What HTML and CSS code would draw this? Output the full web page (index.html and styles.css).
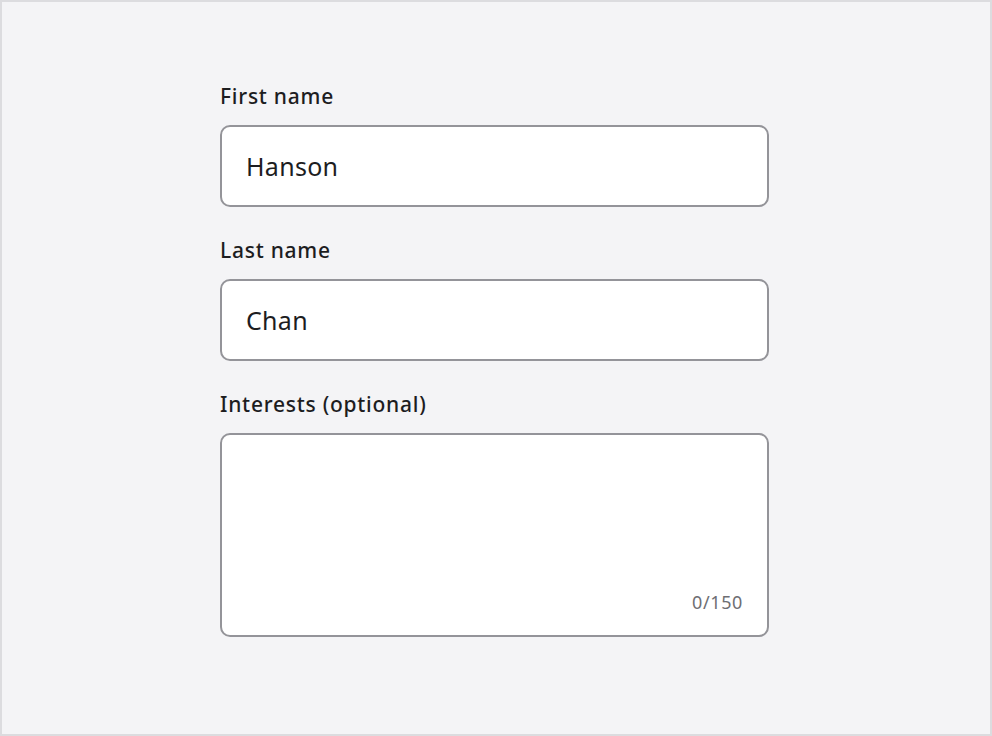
FILE: index.html
```html
<!DOCTYPE html>
<html lang="en">
<head>
  <meta charset="UTF-8">
  <meta name="viewport" content="width=device-width, initial-scale=1.0">
  <title>Profile form</title>
  <link rel="stylesheet" href="styles.css">
</head>
<body>

  <div class="frame">
    <form class="form">
      <div class="field">
        <label class="label" for="first">First name</label>
        <input class="input" id="first" type="text" value="Hanson">
      </div>

      <div class="field">
        <label class="label" for="last">Last name</label>
        <input class="input" id="last" type="text" value="Chan">
      </div>

      <div class="field">
        <label class="label" for="interests">Interests (optional)</label>
        <div class="textarea-box">
          <textarea class="textarea" id="interests" maxlength="150"></textarea>
          <span class="counter">0/150</span>
        </div>
      </div>
    </form>
  </div>

</body>
</html>
```

FILE: styles.css
```css
* {
  box-sizing: border-box;
  margin: 0;
  padding: 0;
}

body {
  font-family: "Noto Sans", "Open Sans", sans-serif;
  color: #1d1d1f;
  background-color: #f4f4f6;
}

.frame {
  width: 992px;
  height: 736px;
  border: 2px solid #dcdcdf;
  background-color: #f4f4f6;
  padding: 79px 0 0 218px;
}

.form {
  width: 549px;
  display: flex;
  flex-direction: column;
  gap: 28px;
}

.field {
  display: flex;
  flex-direction: column;
  gap: 14px;
}

.label {
  font-size: 21px;
  line-height: 30px;
  font-weight: 500;
  letter-spacing: 0.75px;
  color: #1d1d1f;
}

.input {
  height: 82px;
  padding: 0 24px;
  font-family: inherit;
  font-size: 25px;
  letter-spacing: 0.3px;
  color: #1d1d1f;
  background-color: white;
  border: 2px solid #949499;
  border-radius: 10px;
  outline: none;
}

.textarea-box {
  height: 204px;
  display: flex;
  flex-direction: column;
  padding: 15px 24px 21px 24px;
  background-color: white;
  border: 2px solid #949499;
  border-radius: 10px;
}

.textarea {
  flex: 1;
  border: none;
  outline: none;
  resize: none;
  font-family: inherit;
  font-size: 25px;
  color: #1d1d1f;
}

.counter {
  align-self: flex-end;
  font-size: 18px;
  line-height: 24px;
  letter-spacing: 0.6px;
  color: #6e6e73;
}
```
